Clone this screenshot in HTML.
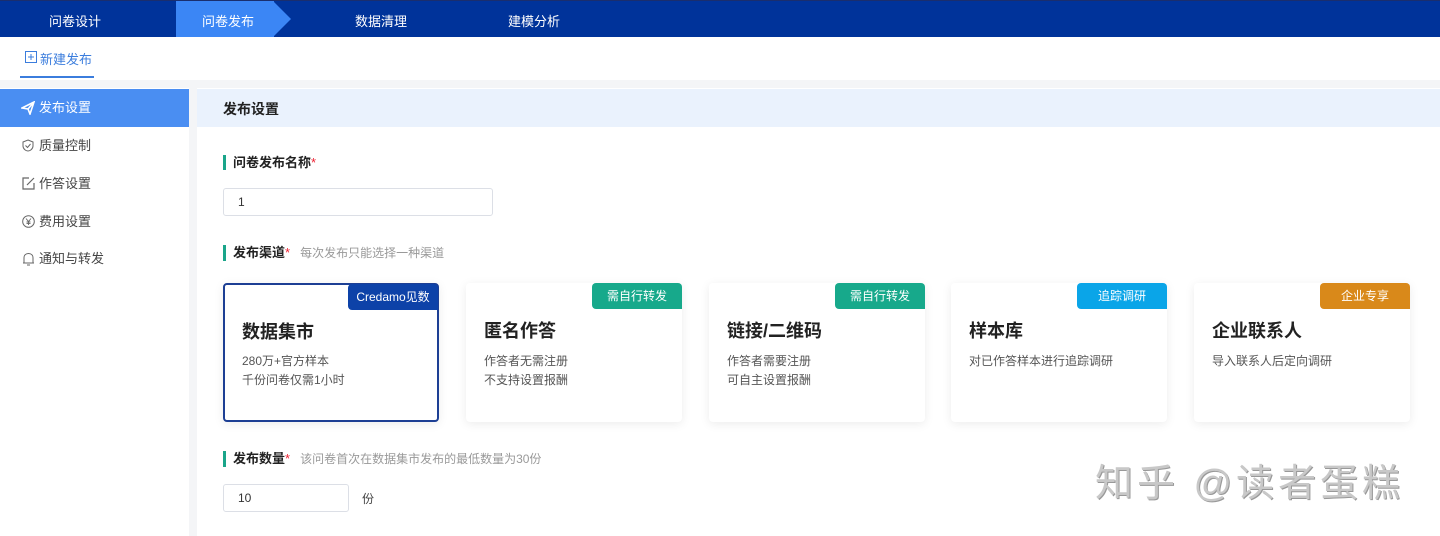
<!DOCTYPE html>
<html><head><meta charset="utf-8"><style>
*{margin:0;padding:0;box-sizing:border-box}
body{width:1440px;height:536px;overflow:hidden;background:#f4f5f7;font-family:"Liberation Sans","Noto Sans CJK SC",sans-serif;position:relative;color:#333}
.abs{position:absolute}
.nav{left:0;top:0;width:1440px;height:37px;background:#00339a;border-top:1px solid #1a2e6e}
.nav span{position:absolute;top:10px;color:#fff;font-size:13px}
.sub{left:0;top:37px;width:1440px;height:43px;background:#fff}
.side{left:0;top:88px;width:189px;height:448px;background:#fff}
.side div{position:absolute;left:0;width:189px;height:38px;font-size:13px;color:#444;padding-left:39px;line-height:38px}
.main{left:197px;top:88px;width:1243px;height:448px;background:#fff}
.lbl{position:absolute;font-size:13px;font-weight:bold;color:#222;border-left:3px solid #1aa58a;padding-left:7px;line-height:15px}
.lbl i{color:#e23;font-style:normal;font-weight:normal}
.lbl em{font-style:normal;font-weight:normal;color:#999;font-size:12px;margin-left:10px}
.inp{position:absolute;border:1px solid #dcdfe6;border-radius:3px;background:#fff;font-size:12px;color:#333;padding-left:14px;line-height:26px}
.card{position:absolute;top:283px;width:216px;height:139px;background:#fff;border-radius:4px;box-shadow:0 2px 10px rgba(0,0,0,.08)}
.card h3{position:absolute;left:18px;top:34px;font-size:18px;color:#222}
.card p{position:absolute;left:18px;top:69px;font-size:12px;color:#555;line-height:19px}
.tag{position:absolute;right:0;top:0;width:90px;height:26px;color:#fff;font-size:12px;text-align:center;line-height:26px;border-radius:4px 4px 0 4px}
</style></head><body>
<div class="abs nav">
<span style="left:49px">问卷设计</span>
<div class="abs" style="left:176px;top:0;width:98px;height:36px;background:#3b86f5"></div>
<svg class="abs" style="left:273px;top:0" width="18" height="36"><polygon points="0,0 18,18 0,36" fill="#3b86f5"/></svg>
<span style="left:202px">问卷发布</span>
<span style="left:355px">数据清理</span>
<span style="left:508px">建模分析</span>
</div>
<div class="abs sub">
<svg class="abs" style="left:25px;top:14px" width="12" height="12"><rect x="0.5" y="0.5" width="11" height="11" fill="none" stroke="#3b7ddd"/><path d="M6 3v6M3 6h6" stroke="#3b7ddd"/></svg>
<span class="abs" style="left:40px;top:12px;font-size:13px;color:#3b7ddd">新建发布</span>
<div class="abs" style="left:20px;top:39px;width:74px;height:2px;background:#3b7ddd"></div>
</div>
<div class="abs side">
<div style="top:1px;background:#4a8ef2;color:#fff">发布设置</div>
<div style="top:39px">质量控制</div>
<div style="top:77px">作答设置</div>
<div style="top:115px">费用设置</div>
<div style="top:152px">通知与转发</div>
<svg class="abs" style="left:21px;top:13px" width="14" height="14"><path d="M1 7L13 1L9 13L7 8Z M7 8L13 1" fill="none" stroke="#fff" stroke-width="1.6"/></svg>
<svg class="abs" style="left:22px;top:51px" width="12" height="13"><path d="M6 1L11 3V7C11 10 8 12 6 12C4 12 1 10 1 7V3Z M3.5 6.5L5.5 8.5L8.5 5" fill="none" stroke="#666"/></svg>
<svg class="abs" style="left:22px;top:89px" width="13" height="13"><path d="M7 1H1V12H12V6 M5 8L12 1" fill="none" stroke="#666" stroke-width="1.2"/></svg>
<svg class="abs" style="left:22px;top:127px" width="13" height="13"><circle cx="6.5" cy="6.5" r="5.8" fill="none" stroke="#666"/><path d="M4 3.5L6.5 6.5L9 3.5M6.5 6.5V10M4.5 7h4M4.5 8.6h4" fill="none" stroke="#666" stroke-width=".9"/></svg>
<svg class="abs" style="left:22px;top:164px" width="13" height="14"><path d="M2 11V6C2 3 4 1.5 6.5 1.5S11 3 11 6V11ZM1 11H12M5 13H8" fill="none" stroke="#666"/></svg>
</div>
<div class="abs main">
<div class="abs" style="left:0;top:1px;width:1243px;height:38px;background:#eaf2fd"></div>
<span class="abs" style="left:26px;top:11px;font-size:14px;font-weight:bold;color:#222">发布设置</span>
</div>
<div class="lbl" style="left:223px;top:155px">问卷发布名称<i>*</i></div>
<div class="inp" style="left:223px;top:188px;width:270px;height:28px">1</div>
<div class="lbl" style="left:223px;top:245px">发布渠道<i>*</i><em>每次发布只能选择一种渠道</em></div>
<div class="card" style="left:223px;border:2px solid #1d3f94"><div class="tag" style="background:#0d42a8;right:-1px;top:-1px">Credamo见数</div><h3 style="left:17px;top:33px">数据集市</h3><p style="left:17px;top:67px">280万+官方样本<br>千份问卷仅需1小时</p></div>
<div class="card" style="left:466px"><div class="tag" style="background:#17a98b">需自行转发</div><h3>匿名作答</h3><p>作答者无需注册<br>不支持设置报酬</p></div>
<div class="card" style="left:709px"><div class="tag" style="background:#17a98b">需自行转发</div><h3>链接/二维码</h3><p>作答者需要注册<br>可自主设置报酬</p></div>
<div class="card" style="left:951px"><div class="tag" style="background:#0aa5e8">追踪调研</div><h3>样本库</h3><p>对已作答样本进行追踪调研</p></div>
<div class="card" style="left:1194px"><div class="tag" style="background:#d9891a">企业专享</div><h3>企业联系人</h3><p>导入联系人后定向调研</p></div>
<div class="lbl" style="left:223px;top:451px">发布数量<i>*</i><em>该问卷首次在数据集市发布的最低数量为30份</em></div>
<div class="inp" style="left:223px;top:484px;width:126px;height:28px">10</div>
<span class="abs" style="left:362px;top:490px;font-size:12px;color:#444">份</span>
<span class="abs" style="left:1095px;top:452px;font-size:38px;color:#c8c8c8;letter-spacing:4px;text-shadow:1px 1px 0 #999">知乎 @读者蛋糕</span>
</body></html>
